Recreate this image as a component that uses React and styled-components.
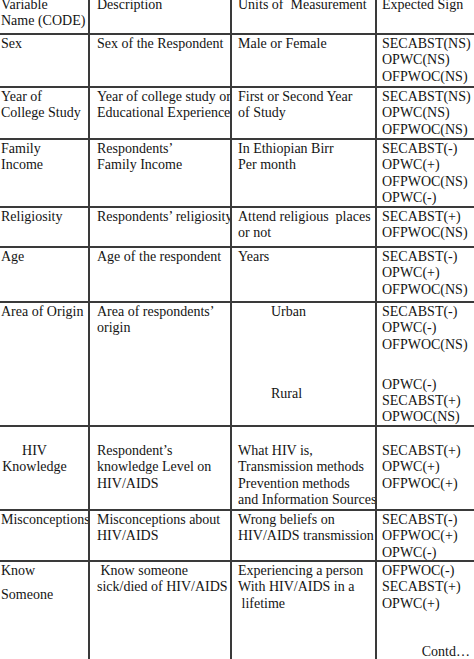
import React from "react";
import styled, { createGlobalStyle } from "styled-components";

const GlobalStyle = createGlobalStyle`
  html, body {
    margin: 0;
    padding: 0;
    background: #fff;
  }
  body {
    font-family: "Liberation Serif", "Times New Roman", serif;
    overflow: hidden;
  }
`;

const RULE = "2px solid #3a3a3a";
const WIDTHS = [88, 142, 145, 99];
const PAD_LEFT = [1, 7, 6, 5];

const Sheet = styled.div`
  width: 474px;
  height: 659px;
  overflow: hidden;
`;

const Table = styled.div`
  margin-top: -4px;
`;

const Row = styled.div`
  display: flex;
  height: ${(p) => p.$h}px;
  box-sizing: border-box;
  border-top: ${(p) => (p.$first ? "none" : RULE)};
`;

const Cell = styled.div`
  flex: none;
  box-sizing: border-box;
  width: ${(p) => p.$w}px;
  padding-top: ${(p) => p.$pt}px;
  padding-left: ${(p) => p.$pl}px;
  padding-right: ${(p) => p.$pr || 0}px;
  border-left: ${(p) => (p.$first ? "none" : RULE)};
  overflow: hidden;
  white-space: pre;
  font-size: 14px;
  line-height: 16.3px;
  color: #141414;
  text-align: ${(p) => p.$align || "left"};
`;

const Line = styled.div`
  margin-top: ${(p) => p.$gap || 0}px;
  padding-left: ${(p) => p.$indent || 0}px;
  padding-right: ${(p) => p.$right || 0}px;
  text-align: ${(p) => (p.$right ? "right" : "inherit")};
`;

// each cell is a list of lines; a line may be a string or an object
const rows = [
  {
    h: 37,
    cells: [
      ["Variable", "Name (CODE)"],
      ["Description"],
      ["Units of  Measurement"],
      ["Expected Sign"],
    ],
  },
  {
    h: 53,
    cells: [
      ["Sex"],
      ["Sex of the Respondent"],
      ["Male or Female"],
      ["SECABST(NS)", "OPWC(NS)", "OFPWOC(NS)"],
    ],
  },
  {
    h: 52,
    cells: [
      ["Year of", "College Study"],
      ["Year of college study or", "Educational Experience"],
      ["First or Second Year", "of Study"],
      ["SECABST(NS)", "OPWC(NS)", "OFPWOC(NS)"],
    ],
  },
  {
    h: 68,
    cells: [
      ["Family", "Income"],
      ["Respondents\u2019", "Family Income"],
      ["In Ethiopian Birr", "Per month"],
      ["SECABST(-)", "OPWC(+)", "OFPWOC(NS)", "OPWC(-)"],
    ],
  },
  {
    h: 40,
    cells: [
      ["Religiosity"],
      ["Respondents\u2019 religiosity"],
      ["Attend religious  places", "or not"],
      ["SECABST(+)", "OFPWOC(NS)"],
    ],
  },
  {
    h: 55,
    cells: [
      ["Age"],
      ["Age of the respondent"],
      ["Years"],
      ["SECABST(-)", "OPWC(+)", "OFPWOC(NS)"],
    ],
  },
  {
    h: 124,
    cells: [
      ["Area of Origin"],
      ["Area of respondents\u2019", "origin"],
      [
        { t: "Urban", indent: 33 },
        { t: "Rural", indent: 33, gap: 65.7 },
      ],
      [
        "SECABST(-)",
        "OPWC(-)",
        "OFPWOC(NS)",
        { t: "OPWC(-)", gap: 23.7 },
        "SECABST(+)",
        "OPWOC(NS)",
      ],
    ],
  },
  {
    h: 84,
    pt: 16,
    cells: [
      { lines: ["HIV", "Knowledge"], align: "center", pr: 20 },
      ["Respondent\u2019s", "knowledge Level on", "HIV/AIDS"],
      [
        "What HIV is,",
        "Transmission methods",
        "Prevention methods",
        "and Information Sources",
      ],
      ["SECABST(+)", "OPWC(+)", "OFPWOC(+)"],
    ],
  },
  {
    h: 51,
    cells: [
      ["Misconceptions"],
      ["Misconceptions about", "HIV/AIDS"],
      ["Wrong beliefs on", "HIV/AIDS transmission"],
      ["SECABST(-)", "OFPWOC(+)", "OPWC(-)"],
    ],
  },
  {
    h: 120,
    cells: [
      ["Know", { t: "Someone", gap: 7.7 }],
      [" Know someone", "sick/died of HIV/AIDS"],
      ["Experiencing a person", "With HIV/AIDS in a", " lifetime"],
      [
        "OFPWOC(-)",
        "SECABST(+)",
        "OPWC(+)",
        { t: "Contd\u2026", gap: 31.7, right: 4 },
      ],
    ],
  },
];

const App = () => {
  return (
    <Sheet>
      <GlobalStyle />
      <Table>
        {rows.map((row, ri) => (
          <Row key={ri} $h={row.h} $first={ri === 0}>
            {row.cells.map((cell, ci) => {
              const spec = Array.isArray(cell) ? { lines: cell } : cell;
              return (
                <Cell
                  key={ci}
                  $w={WIDTHS[ci]}
                  $pl={PAD_LEFT[ci]}
                  $pr={spec.pr}
                  $pt={row.pt || 1}
                  $align={spec.align}
                  $first={ci === 0}
                >
                  {spec.lines.map((ln, li) =>
                    typeof ln === "string" ? (
                      <Line key={li}>{ln}</Line>
                    ) : (
                      <Line
                        key={li}
                        $gap={ln.gap}
                        $indent={ln.indent}
                        $right={ln.right}
                      >
                        {ln.t}
                      </Line>
                    )
                  )}
                </Cell>
              );
            })}
          </Row>
        ))}
      </Table>
    </Sheet>
  );
};

export default App;
